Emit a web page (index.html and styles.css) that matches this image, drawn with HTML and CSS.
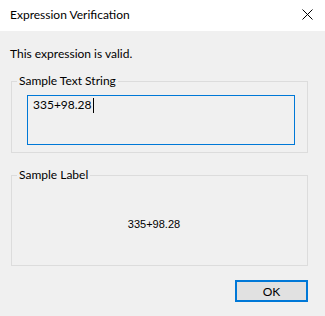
FILE: index.html
```
<!DOCTYPE html>
<html lang="en">
<head>
    <meta charset="UTF-8">
    <title>Expression Verification</title>
    <link rel="stylesheet" href="styles.css">
</head>
<body>
    <div class="dialog">
        <div class="titlebar">
            <span class="title">Expression Verification</span>
            <span class="close">
                <svg width="11" height="11" viewBox="0 0 11 11">
                    <path d="M0.5 0.5 L10.5 10.5 M10.5 0.5 L0.5 10.5" stroke="#000" stroke-width="1" fill="none"/>
                </svg>
            </span>
        </div>

        <div class="content">
            <p class="message">This expression is valid.</p>

            <fieldset class="group">
                <legend class="group-title">Sample Text String</legend>
                <div class="textbox">335+98.28<span class="caret"></span></div>
            </fieldset>

            <fieldset class="group">
                <legend class="group-title">Sample Label</legend>
                <div class="sample-label">335+98.28</div>
            </fieldset>

            <div class="buttons">
                <button class="ok-button">OK</button>
            </div>
        </div>
    </div>
</body>
</html>
```

FILE: styles.css
```
* {
    margin: 0;
    padding: 0;
    box-sizing: border-box;
}

html, body {
    width: 325px;
    height: 316px;
    overflow: hidden;
}

body {
    font-family: Lato, "Noto Sans", sans-serif;
    font-size: 12px;
    color: #000;
    background: #f0f0f0;
}

.dialog {
    display: flex;
    flex-direction: column;
    height: 100%;
}

.titlebar {
    height: 31px;
    background: #fff;
    display: flex;
    align-items: center;
    justify-content: space-between;
    padding: 0 12px 1px 10px;
}

.title {
    font-size: 12px;
    line-height: 16px;
}

.close {
    display: flex;
    margin-top: -1px;
}

.content {
    flex: 1;
    padding: 15px 17px 0 11px;
}

.message {
    line-height: 16px;
    margin-left: -1px;
    margin-bottom: 11px;
}

.group {
    border: 1px solid #dcdcdc;
    padding: 6px 12px 7px 15px;
    margin-bottom: 14px;
}

.group-title {
    line-height: 16px;
    padding: 0 2px;
    margin-left: -10px;
}

.textbox {
    height: 50px;
    border: 1px solid #0078d7;
    padding: 1px 5px;
    line-height: 16px;
    display: flex;
    align-items: flex-start;
}

.caret {
    display: inline-block;
    width: 1px;
    height: 15px;
    background: #000;
    margin-left: 1px;
    margin-top: 1px;
}

.sample-label {
    height: 69px;
    display: flex;
    align-items: center;
    justify-content: center;
    font-family: "Liberation Sans", Arial, sans-serif;
    font-size: 11px;
    margin-left: -14px;
}

.buttons {
    display: flex;
    justify-content: flex-end;
    margin-top: 2px;
}

.ok-button {
    width: 73px;
    height: 22px;
    background: #e1e1e1;
    border: 2px solid #0078d7;
    font-family: Lato, "Noto Sans", sans-serif;
    font-size: 12px;
    color: #000;
}
```
